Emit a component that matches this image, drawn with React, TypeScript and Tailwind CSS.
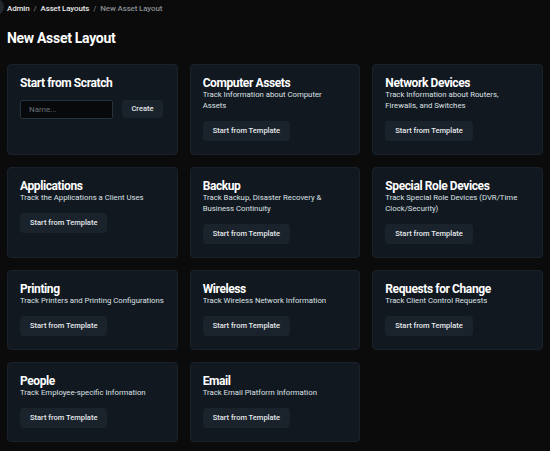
import {useState} from "react";

interface Template {
  title: string,
  description: string,
}

// "\n" marks where the reference wraps when the font width lands a hair short
const templates: Template[] = [
  {title: "Computer Assets", description: "Track Information about Computer\nAssets"},
  {title: "Network Devices", description: "Track Information about Routers, Firewalls, and Switches"},
  {title: "Applications", description: "Track the Applications a Client Uses"},
  {title: "Backup", description: "Track Backup, Disaster Recovery & Business Continuity"},
  {title: "Special Role Devices", description: "Track Special Role Devices (DVR/Time Clock/Security)"},
  {title: "Printing", description: "Track Printers and Printing Configurations"},
  {title: "Wireless", description: "Track Wireless Network Information"},
  {title: "Requests for Change", description: "Track Client Control Requests"},
  {title: "People", description: "Track Employee-specific Information"},
  {title: "Email", description: "Track Email Platform Information"},
];

const Card = ({children}: { children: React.ReactNode }) => (
  <div className="flex flex-col items-start rounded-[4px] border border-[#19222b] bg-[#111820] px-[12px] pt-[12px] pb-[13px]">
    {children}
  </div>
)

const TemplateCard = ({title, description}: Template) => (
  <Card>
    <h2 className="text-[12px] font-bold leading-[12px] tracking-[-0.4px] text-white">{title}</h2>
    <p className="whitespace-pre-line text-[7.75px] leading-[11px] text-[#dde1e5]">{description}</p>
    <button className="mt-[10px] h-[20px] rounded-[4px] bg-[#1a232c] px-[10px] text-[7.5px] font-medium text-[#e4e7ea]">
      Start from Template
    </button>
  </Card>
)

export default function App() {
  const [name, setName] = useState("");

  return (
    <div className="relative min-h-screen bg-[#0b0b0c] px-[7px] pb-[10px] font-['Roboto',sans-serif]">
      <div className="absolute -left-[12px] -top-[1px] h-[16px] w-[16px] rounded-full bg-[#23282e]"/>

      <nav className="flex items-center gap-[4px] pt-[3px] text-[8px] font-medium leading-[12px] tracking-[-0.15px]">
        <span className="text-[#e6e6e6]">Admin</span>
        <span className="text-[#6f7378]">/</span>
        <span className="text-[#e6e6e6]">Asset Layouts</span>
        <span className="text-[#6f7378]">/</span>
        <span className="text-[#8a8d91]">New Asset Layout</span>
      </nav>

      <h1 className="mt-[13px] mb-[16px] text-[14px] font-bold leading-[20px] tracking-[-0.3px] text-white">New Asset Layout</h1>

      <div className="grid grid-cols-3 gap-[12px]">
        <Card>
          <h2 className="text-[12px] font-bold leading-[12px] tracking-[-0.4px] text-white">Start from Scratch</h2>
          <div className="mt-[11px] flex items-start gap-[9px]">
            <input
              value={name}
              onChange={e => setName(e.target.value)}
              placeholder="Name..."
              className="h-[19px] w-[93px] rounded-[2px] border border-[#26323d] bg-[#08090b] px-[8px] text-[8px] text-white placeholder:text-[#6b7077] outline-none"
            />
            <button className="h-[18px] w-[41px] rounded-[4px] bg-[#1a232c] text-[7.5px] font-medium text-[#e4e7ea]">
              Create
            </button>
          </div>
        </Card>
        {templates.map(t => (
          <TemplateCard key={t.title} title={t.title} description={t.description}/>
        ))}
      </div>
    </div>
  )
}
